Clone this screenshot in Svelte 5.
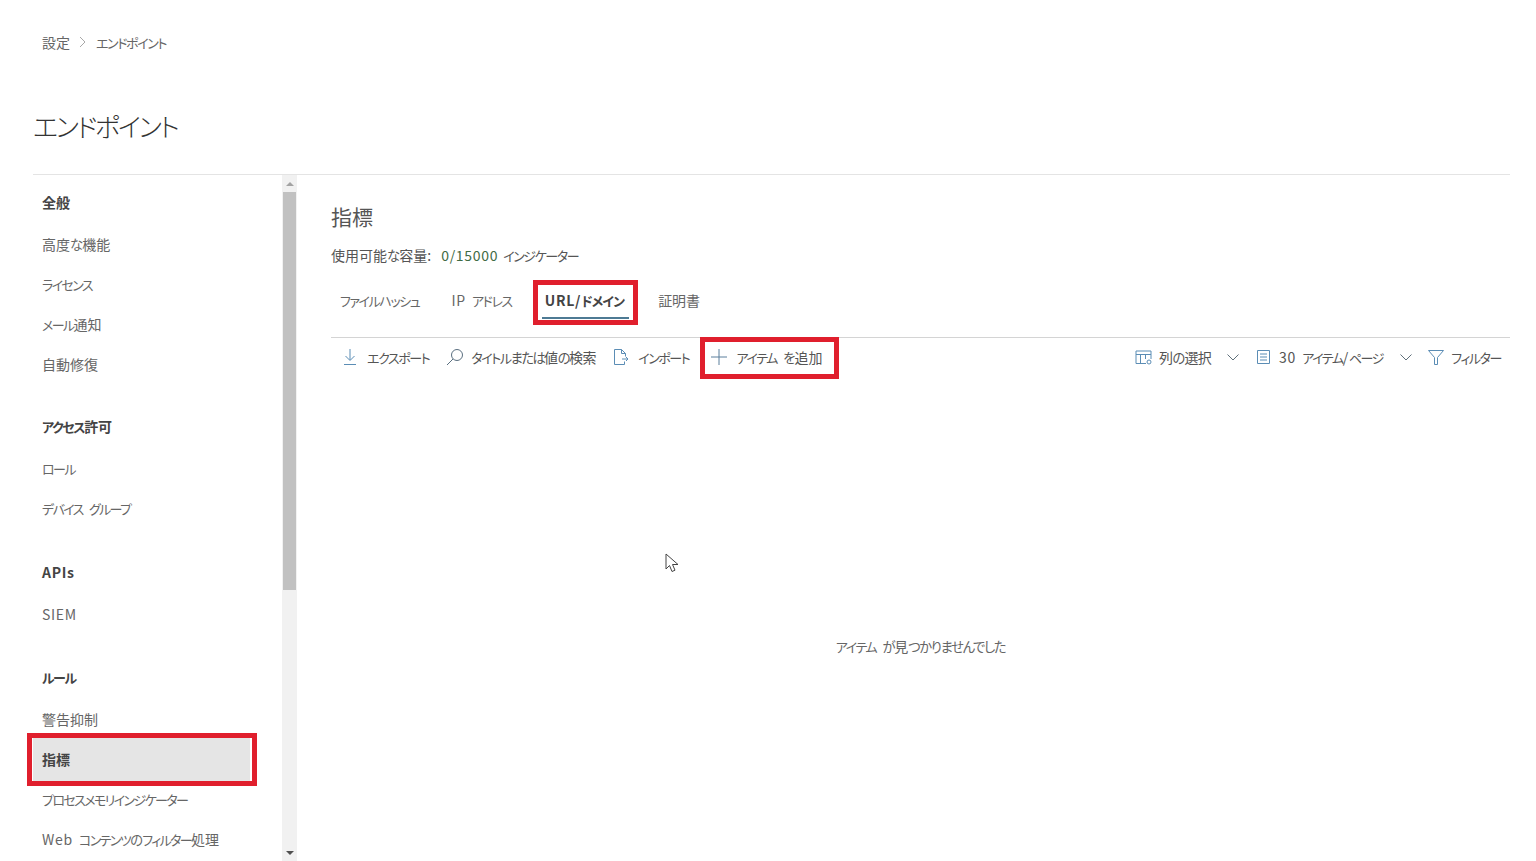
<script>
	const groups = [
		{ title: '全般', items: ['高度な機能', 'ライセンス', 'メール通知', '自動修復'] },
		{ title: 'アクセス許可', items: ['ロール', 'デバイス グループ'] },
		{ title: 'APIs', items: ['SIEM'] },
		{ title: 'ルール', items: ['警告抑制', '指標', 'プロセスメモリインジケーター', 'Web コンテンツのフィルター処理'] }
	];
	const tabs = ['ファイルハッシュ', 'IP アドレス', 'URL/ドメイン', '証明書'];

	// かな・英数ごとに字間を変えるため、文字種で分割する
	function runs(text) {
		const parts = text.match(/[\u30A0-\u30FF]+|[\u3040-\u309F]+|[A-Za-z0-9\/]+|[^\u3040-\u30FFA-Za-z0-9\/]+/g);
		return parts.map((s) => {
			let cls = '';
			if (/^[\u30A0-\u30FF]/.test(s)) cls = 'kata';
			else if (/^[\u3040-\u309F]/.test(s)) cls = 'hira';
			else if (/^[A-Za-z0-9\/]/.test(s)) cls = 'latin';
			return { s, cls };
		});
	}
</script>

{#snippet t(text)}{#each runs(text) as r}<span class={r.cls}>{r.s}</span>{/each}{/snippet}

<div class="page">
	<div class="crumbs">
		<span>設定</span>
		<svg class="crumb-sep" width="8" height="12" viewBox="0 0 8 12"><path d="M1 1l5 5-5 5" fill="none" stroke="#a8a8a8" /></svg>
		<span>{@render t('エンドポイント')}</span>
	</div>
	<h1>{@render t('エンドポイント')}</h1>

	<div class="body">
		<aside class="sidebar">
			<nav>
				{#each groups as group}
					<div class="group">
						<div class="heading">{@render t(group.title)}</div>
						{#each group.items as item}
							<div class="item" class:active={item === '指標'}>{@render t(item)}</div>
						{/each}
					</div>
				{/each}
			</nav>
			<div class="scrollbar">
				<div class="arrow"><span class="tri up"></span></div>
				<div class="thumb"></div>
				<div class="rest"></div>
				<div class="arrow"><span class="tri down"></span></div>
			</div>
		</aside>

		<main>
			<h2>指標</h2>
			<div class="capacity">
				<span>{@render t('使用可能な容量:')}</span>
				<span class="count">{@render t('0/15000')}</span>
				<span>{@render t('インジケーター')}</span>
			</div>

			<div class="tabs">
				{#each tabs as tab}
					<div class="tab" class:selected={tab === 'URL/ドメイン'}>{@render t(tab)}</div>
				{/each}
			</div>

			<div class="toolbar">
				<div class="tools">
					<div class="tool export">
						<svg width="14" height="18" viewBox="0 0 14 18" fill="none" stroke="#5b8db5"><path d="M7 1v11M2.5 8l4.5 4.5L11.5 8M1 16.5h12" /></svg>
						<span>{@render t('エクスポート')}</span>
					</div>
					<div class="tool search">
						<svg width="18" height="18" viewBox="0 0 18 18" fill="none" stroke="#5a6f80"><circle cx="11" cy="7" r="5.5" /><path d="M7 11l-6 6" /></svg>
						<span>{@render t('タイトルまたは値の検索')}</span>
					</div>
					<div class="tool import">
						<svg width="16" height="18" viewBox="0 0 16 18" fill="none" stroke="#5b8db5"><path d="M1.5 1.5h7l4 4v3M8.5 1.5v4h4M1.5 1.5v15h10v-3M9 11h6M13 9l2 2-2 2" /></svg>
						<span>{@render t('インポート')}</span>
					</div>
					<div class="tool add">
						<svg width="16" height="16" viewBox="0 0 16 16" fill="none" stroke="#5a7f9c"><path d="M8 0v16M0 8h16" /></svg>
						<span>{@render t('アイテム を追加')}</span>
					</div>
				</div>

				<div class="tools right">
					<div class="tool cols">
						<svg width="17" height="15" viewBox="0 0 17 15" fill="none" stroke="#5b8db5"><path d="M11 13.5H1V1h15v8M1 4.5h15M5.5 4.5v9M10.5 4.5V9" /><circle cx="14" cy="12" r="2" /></svg>
						<span>{@render t('列の選択')}</span>
						<svg class="chev" width="12" height="7" viewBox="0 0 12 7" fill="none" stroke="#5f6f7a"><path d="M.5.5L6 6 11.5.5" /></svg>
					</div>
					<div class="tool pages">
						<svg width="13" height="14" viewBox="0 0 13 14" fill="none" stroke="#5b8db5"><path d="M.5.5h12v13H.5zM3 4h7M3 7h7M3 10h7" /></svg>
						<span>{@render t('30 アイテム/ページ')}</span>
						<svg class="chev" width="12" height="7" viewBox="0 0 12 7" fill="none" stroke="#5f6f7a"><path d="M.5.5L6 6 11.5.5" /></svg>
					</div>
					<div class="tool filter">
						<svg width="16" height="15" viewBox="0 0 16 15" fill="none" stroke="#5b8db5"><path d="M.5.5h15L9.5 7.5v7h-3v-7z" /></svg>
						<span>{@render t('フィルター')}</span>
					</div>
				</div>
			</div>

			<div class="empty">{@render t('アイテム が見つかりませんでした')}</div>
		</main>
	</div>

	<svg class="cursor" width="15" height="21" viewBox="0 0 15 21"><path d="M1 1v15l3.5-3.5 2.5 6 3-1.3-2.5-5.7H13z" fill="#fff" stroke="#444" /></svg>
</div>

<style>
	:global(body) {
		background: #fff;
		overflow: hidden;
	}

	.kata {
		font-size: 0.93em;
		letter-spacing: -0.11em;
	}

	.hira {
		font-size: 0.95em;
		letter-spacing: -0.06em;
	}

	.latin {
		letter-spacing: 0.05em;
	}

	.page {
		position: relative;
		height: 861px;
		padding: 0 26px 0 33px;
		box-sizing: border-box;
		overflow: hidden;
		font-family: 'Noto Sans CJK JP', 'Noto Sans', sans-serif;
		font-feature-settings: 'palt';
		font-size: 14px;
		word-spacing: 3px;
		color: #555;
	}

	.crumbs {
		display: flex;
		align-items: center;
		gap: 9px;
		height: 20px;
		padding: 32px 0 0 9px;
		color: #666;
	}

	h1 {
		margin: 50px 0 0;
		height: 72px;
		font-size: 28px;
		font-weight: 300;
		line-height: 46px;
		color: #333;
	}

	h1 .kata {
		letter-spacing: -0.085em;
	}

	.body {
		display: flex;
		border-top: 1px solid #e4e4e4;
		height: 686px;
	}

	/* サイドバー */
	.sidebar {
		display: flex;
		flex: none;
		width: 264px;
	}

	nav {
		flex: 1;
		padding-top: 6px;
		min-width: 0;
	}

	.group {
		margin-bottom: 23px;
	}

	.group:first-child {
		margin-top: 1px;
		margin-bottom: 22px;
	}

	.group:nth-child(2) {
		margin-bottom: 24px;
	}

	.heading {
		height: 40px;
		margin-bottom: 2px;
		padding-left: 9px;
		font-weight: 700;
		line-height: 40px;
		color: #444;
	}

	.item {
		position: relative;
		width: 217px;
		height: 40px;
		padding-left: 9px;
		box-sizing: border-box;
		line-height: 40px;
		white-space: nowrap;
		color: #666;
	}

	.item .kata {
		letter-spacing: -0.125em;
	}

	.item.active {
		height: 43px;
		margin: -1px 0 -2px;
		background: #e5e5e5;
		line-height: 42px;
		font-weight: 700;
		color: #444;
	}

	/* 選択中の項目を囲む赤枠 */
	.item.active::after {
		content: '';
		position: absolute;
		left: -6px;
		right: -7px;
		top: -5px;
		bottom: -5px;
		border: 5px solid #e01f2d;
	}

	.scrollbar {
		display: flex;
		flex: none;
		flex-direction: column;
		width: 15px;
		background: #f1f1f1;
	}

	.arrow {
		display: flex;
		align-items: center;
		justify-content: center;
		height: 17px;
	}

	.tri {
		border-left: 4px solid transparent;
		border-right: 4px solid transparent;
	}

	.tri.up {
		border-bottom: 4px solid #a3a3a3;
	}

	.tri.down {
		border-top: 4px solid #505050;
	}

	.thumb {
		height: 398px;
		margin: 0 1px;
		background: #c1c1c1;
	}

	.rest {
		flex: 1;
	}

	/* メイン */
	main {
		flex: 1;
		display: flex;
		flex-direction: column;
		min-width: 0;
		padding-left: 34px;
	}

	h2 {
		margin: 26px 0 0;
		height: 30px;
		font-size: 21px;
		font-weight: 400;
		line-height: 30px;
		color: #555;
	}

	.capacity {
		display: flex;
		gap: 10px;
		height: 20px;
		margin-top: 14px;
		line-height: 20px;
		color: #555;
	}

	.count {
		margin-right: -5px;
		color: #3f6b45;
	}

	.tabs {
		display: flex;
		gap: 32px;
		flex: none;
		height: 63px;
		padding-left: 9px;
		box-sizing: border-box;
		border-bottom: 1px solid #d4d4d4;
		margin-top: 10px;
	}

	.tab {
		position: relative;
		height: 40px;
		margin-top: 5px;
		line-height: 40px;
		white-space: nowrap;
		color: #666;
	}

	.tab.selected {
		margin-left: 1px;
		margin-right: 2px;
		font-weight: 700;
		color: #444;
	}

	.tab.selected .kata {
		letter-spacing: -0.07em;
	}

	/* 選択中タブの下線と赤枠 */
	.tab.selected::before {
		content: '';
		position: absolute;
		left: -3px;
		right: -5px;
		bottom: 1px;
		height: 2px;
		background: #4d7a94;
	}

	.tab.selected::after {
		content: '';
		position: absolute;
		left: -12px;
		right: -14px;
		top: 0;
		bottom: -5px;
		border: 5px solid #e01f2d;
	}

	.toolbar {
		display: flex;
		flex: none;
		justify-content: space-between;
		height: 38px;
		padding-right: 9px;
	}

	.tools {
		display: flex;
		align-items: center;
	}

	.tool {
		display: flex;
		align-items: center;
		gap: 9px;
		white-space: nowrap;
		color: #555;
	}

	.tools.right {
		gap: 18px;
	}

	.chev {
		margin-left: 6px;
	}

	.export {
		gap: 10px;
		margin-left: 12px;
		margin-right: 17px;
	}

	.search {
		gap: 7px;
		margin-right: 17px;
		letter-spacing: -0.4px;
	}

	.search .hira {
		letter-spacing: -0.12em;
	}

	.import {
		gap: 9px;
		margin-right: 11px;
	}

	.add {
		position: relative;
		align-self: flex-start;
		gap: 9px;
		height: 42px;
		margin-top: -1px;
		padding: 0 16px 2px 11px;
		box-sizing: border-box;
	}

	.add::after {
		content: '';
		position: absolute;
		inset: 0;
		border: 5px solid #e01f2d;
	}

	.cols {
		gap: 7px;
		letter-spacing: -0.7px;
	}

	.cols .chev {
		margin-left: 9px;
	}

	.pages .chev {
		margin-left: 8px;
	}

	.filter {
		gap: 7px;
		margin-left: -2px;
	}

	.empty {
		margin-top: 260px;
		text-align: center;
		color: #666;
	}

	.empty .hira {
		letter-spacing: -0.1em;
	}

	.cursor {
		position: absolute;
		left: 665px;
		top: 553px;
	}
</style>
